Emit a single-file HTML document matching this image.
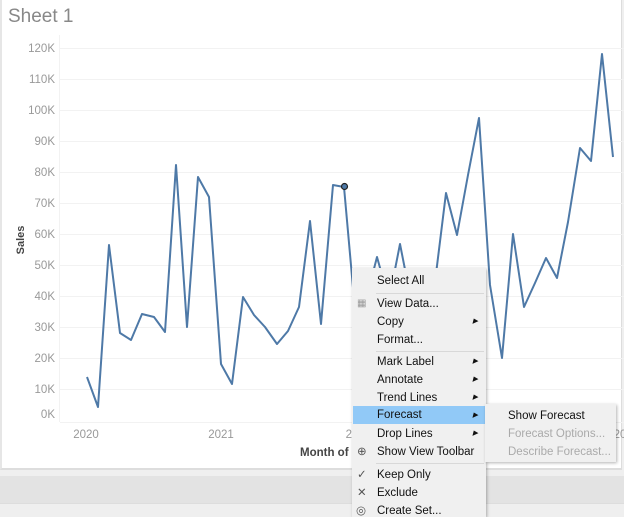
<!DOCTYPE html>
<html><head><style>
html,body{margin:0;width:624px;height:517px;overflow:hidden}
body{background:#efefef;font-family:"Liberation Sans",sans-serif;position:relative}
.panel{position:absolute;left:0;top:0;width:619px;height:468px;background:#fff;border-right:1px solid #ddd;border-bottom:2px solid #ddd;border-left:2px solid #e6e6e6}
.band{position:absolute;left:0;top:476px;width:624px;height:27px;background:#e3e3e3}
.menu{position:absolute;left:352px;top:268px;width:134px;height:249px;background:#f0f0f0;box-shadow:1px 1px 3px rgba(0,0,0,.3);font-size:11.5px;color:#111;overflow:hidden}
.menu .it{position:absolute;left:0;width:134px;height:18px;line-height:18px}
.menu .it span{position:absolute;left:25px}
.menu .ar{position:absolute;right:8px;font-size:7px}
.sep{position:absolute;left:24px;width:108px;height:1px;background:#d8d8d8}
.sub{position:absolute;left:485px;top:404px;width:131px;height:58px;background:#f0f0f0;box-shadow:1px 1px 3px rgba(0,0,0,.3);font-size:11.5px}
.sub div{position:absolute;left:23px;height:18px;line-height:18px}
</style></head><body>
<div class="panel"></div>
<div style="position:absolute;left:8px;top:6px;font-size:19px;color:#888">Sheet 1</div>
<svg style="position:absolute;left:0;top:0" width="624" height="470">
<g stroke="#f2f2f2" stroke-width="1">
<line x1="60" x2="624" y1="48.5" y2="48.5"/><line x1="60" x2="624" y1="79.5" y2="79.5"/><line x1="60" x2="624" y1="110.5" y2="110.5"/><line x1="60" x2="624" y1="141.5" y2="141.5"/><line x1="60" x2="624" y1="172.5" y2="172.5"/><line x1="60" x2="624" y1="203.5" y2="203.5"/><line x1="60" x2="624" y1="234.5" y2="234.5"/><line x1="60" x2="624" y1="265.5" y2="265.5"/><line x1="60" x2="624" y1="296.5" y2="296.5"/><line x1="60" x2="624" y1="327.5" y2="327.5"/><line x1="60" x2="624" y1="358.5" y2="358.5"/><line x1="60" x2="624" y1="389.5" y2="389.5"/><line x1="60" x2="624" y1="422.5" y2="422.5"/><line x1="59.5" x2="59.5" y1="35" y2="422"/>
</g>
<g font-size="11.5" fill="#999" text-anchor="end">
<text x="55" y="52">120K</text><text x="55" y="83">110K</text><text x="55" y="114">100K</text><text x="55" y="145">90K</text><text x="55" y="176">80K</text><text x="55" y="207">70K</text><text x="55" y="238">60K</text><text x="55" y="269">50K</text><text x="55" y="300">40K</text><text x="55" y="331">30K</text><text x="55" y="362">20K</text><text x="55" y="393">10K</text><text x="55" y="418">0K</text>
</g>
<g font-size="11.5" fill="#999" text-anchor="middle"><text x="86" y="438">2020</text><text x="221" y="438">2021</text><text x="352" y="438">20</text><text x="620" y="438">20</text></g>
<text x="300" y="456" font-size="11.5" font-weight="bold" fill="#444">Month of O</text>
<text transform="translate(24,240) rotate(-90)" font-size="11" font-weight="bold" fill="#444" text-anchor="middle">Sales</text>
<polyline fill="none" stroke="#4e79a7" stroke-width="2" stroke-linejoin="round" points="87,377 98,407 109,245 120,333 131,340 142,314 154,317 165,332 176,165 187,327 198,177 209,197 221,364 232,384 243,297 254,315 265,327 277,344 288,331 299,307 310,221 321,324 333,185 344,187 355,310 366,300 377,257 389,300 400,244 411,300 423,320 434,290 446,193 457,235 468,175 479,118 490,285 502,358 513,234 524,307 535,283 546,258 557,278 568,222 580,148 591,161 602,54 613,157"/>
<circle cx="344.5" cy="186.5" r="3" fill="#4e79a7" stroke="#222" stroke-width="1.2"/>
</svg>
<div class="band"></div>
<div style="position:absolute;left:0;top:503px;width:624px;height:1px;background:#ddd"></div>
<div class="menu">
<div class="it" style="top:4px"><span>Select All</span></div>
<div class="sep" style="top:25px"></div>
<div class="it" style="top:27px"><b style="position:absolute;left:5px;top:0;color:#999;font-weight:normal;font-size:10px">▦</b><span>View Data...</span></div>
<div class="it" style="top:45px"><span>Copy</span><i class="ar">▶</i></div>
<div class="it" style="top:63px"><span>Format...</span></div>
<div class="sep" style="top:83px"></div>
<div class="it" style="top:85px"><span>Mark Label</span><i class="ar">▶</i></div>
<div class="it" style="top:103px"><span>Annotate</span><i class="ar">▶</i></div>
<div class="it" style="top:121px"><span>Trend Lines</span><i class="ar">▶</i></div>
<div class="it" style="top:138px;left:1px;width:132px;background:#91c9f7;line-height:19px"><span style="left:24px">Forecast</span><i class="ar" style="right:7px">▶</i></div>
<div class="it" style="top:157px"><span>Drop Lines</span><i class="ar">▶</i></div>
<div class="it" style="top:175px"><b style="position:absolute;left:5px;color:#555;font-weight:normal">⊕</b><span>Show View Toolbar</span></div>
<div class="sep" style="top:195px"></div>
<div class="it" style="top:198px"><b style="position:absolute;left:5px;color:#555;font-weight:normal">✓</b><span>Keep Only</span></div>
<div class="it" style="top:216px"><b style="position:absolute;left:5px;color:#555;font-weight:normal">✕</b><span>Exclude</span></div>
<div class="it" style="top:234px"><b style="position:absolute;left:4px;color:#555;font-weight:normal">◎</b><span>Create Set...</span></div>
</div>
<div class="sub">
<div style="top:3px;color:#111">Show Forecast</div>
<div style="top:21px;color:#aaa">Forecast Options...</div>
<div style="top:39px;color:#aaa">Describe Forecast...</div>
</div>
</body></html>
